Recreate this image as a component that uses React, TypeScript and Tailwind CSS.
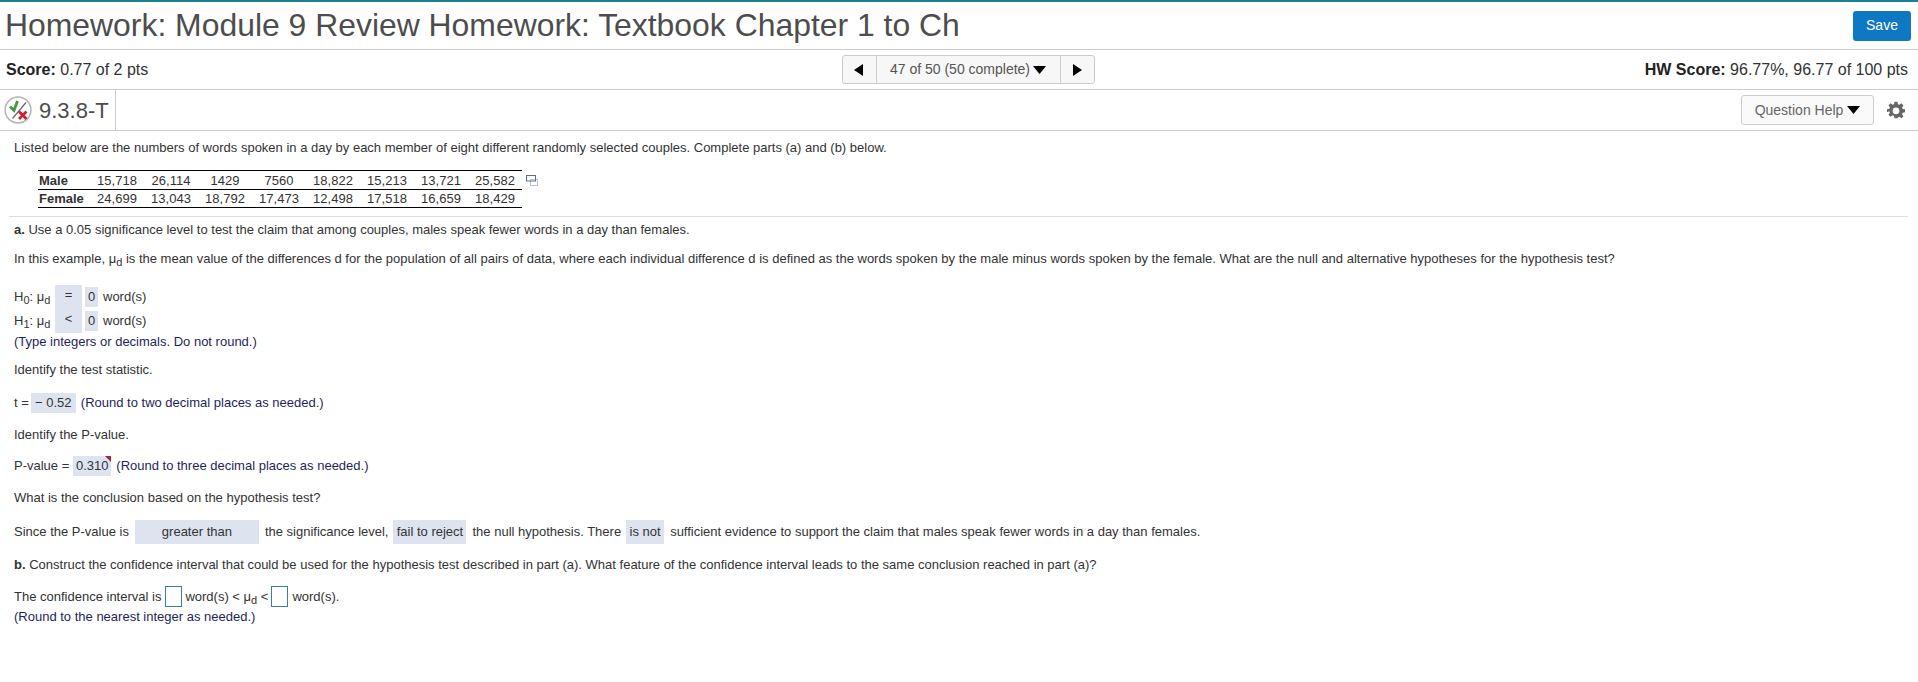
const answer = "bg-[#dde4f0]";

function Mu() {
  return (
    <span>
      μ<sub className="text-[11px]">d</sub>
    </span>
  );
}

function ScoreIcon() {
  return (
    <svg width="28" height="28" viewBox="0 0 28 28" className="shrink-0">
      <circle cx="14" cy="14" r="12.900" fill="#fff" stroke="#b4b4b4" strokeWidth="1.500" />
      <path d="M8.500 22.500 L22 6.500" stroke="#666" strokeWidth="1.200" />
      <path d="M6 10.500 L10 14.500 L13.500 5" fill="none" stroke="#3f9b3f" strokeWidth="2.800" />
      <path d="M15 15.500 L22.500 23 M22.500 15.500 L15 23" stroke="#d0202f" strokeWidth="2.800" />
    </svg>
  );
}

function Gear() {
  return (
    <svg width="18" height="18" viewBox="0 0 24 24" fill="#666">
      <path
        fillRule="evenodd"
        d="M10 1h4l.6 3.200 1.900.8 2.700-1.900 2.800 2.800-1.900 2.700.8 1.900L24 11v4l-3.100.6-.8 1.900 1.900 2.700-2.800 2.800-2.700-1.900-1.900.8L14 23h-4l-.6-3.100-1.900-.8-2.700 1.900-2.800-2.800 1.900-2.700-.8-1.900L0 15v-4l3.100-.6.8-1.900L2 5.800 4.800 3l2.700 1.900 1.900-.8zM12 8.500a4.500 4.500 0 1 0 0 9 4.500 4.500 0 0 0 0-9z"
      />
    </svg>
  );
}

function Caret() {
  return (
    <svg width="13" height="8" viewBox="0 0 13 8" className="shrink-0">
      <path d="M0 0h13L6.500 8z" fill="#000" />
    </svg>
  );
}

const male = ["15,718", "26,114", "1429", "7560", "18,822", "15,213", "13,721", "25,582"];
const female = ["24,699", "13,043", "18,792", "17,473", "12,498", "17,518", "16,659", "18,429"];

export default function App() {
  return (
    <div className="w-[1918px] h-[682px] overflow-hidden bg-white text-[#333] font-['Liberation_Sans',Arial,sans-serif] text-[13px]">
      <div className="h-[50px] border-t-2 border-b border-t-[#1a7f8e] border-b-[#ccc] flex items-center justify-between pl-[5px] pr-[7px]">
        <h1 className="text-[31.900px] leading-none text-[#4d4d4d]">Homework: Module 9 Review Homework: Textbook Chapter 1 to Ch</h1>
        <button className="w-[58px] h-[30px] rounded-[3px] bg-[#0f78c4] text-white text-[14px]">Save</button>
      </div>

      <div className="h-[40px] border-b border-[#ccc] grid grid-cols-3 items-center pl-[6px] pr-[10px] text-[16px]">
        <div>
          <b className="text-[#222]">Score:</b> 0.77 of 2 pts
        </div>
        <div className="flex justify-center">
          <div className="flex h-[29px] ml-[22px] border border-[#ccc] rounded-[3px] bg-[#f7f7f7] text-[14px] text-[#555] items-center">
            <span className="w-[34px] h-full flex items-center justify-center border-r border-[#ccc]">
              <svg width="10" height="12" viewBox="0 0 10 12"><path d="M9 0v12L0 6z" fill="#000" /></svg>
            </span>
            <span className="w-[183px] flex items-center justify-center gap-[3px]">
              47 of 50 (50 complete)
              <Caret />
            </span>
            <span className="w-[34px] h-full flex items-center justify-center border-l border-[#ccc]">
              <svg width="10" height="12" viewBox="0 0 10 12"><path d="M1 0v12l9-6z" fill="#000" /></svg>
            </span>
          </div>
        </div>
        <div className="text-right">
          <b className="text-[#222]">HW Score:</b> 96.77%, 96.77 of 100 pts
        </div>
      </div>

      <div className="h-[41px] border-b border-[#ccc] flex items-center pl-[4px] pr-[13px]">
        <ScoreIcon />
        <span className="ml-[7px] pr-[6px] h-full flex items-center border-r border-[#ccc] text-[22px] text-[#4d4d4d]">9.3.8-T</span>
        <button className="ml-auto w-[133px] h-[30px] border border-[#ccc] rounded-[3px] bg-[#fafafa] text-[14px] text-[#666] flex items-center justify-center gap-[4px]">
          Question Help
          <Caret />
        </button>
        <span className="ml-[13px]"><Gear /></span>
      </div>

      <div className="pl-[14px] pr-[10px]">
        <p className="pt-[9px] leading-[15px]">Listed below are the numbers of words spoken in a day by each member of eight different randomly selected couples. Complete parts (a) and (b) below.</p>

        <div className="flex items-center ml-[24px] mt-[15px]">
          <table className="border-y border-black leading-[15px]">
            <tbody>
              <tr className="border-b border-black h-[19px]">
                <th className="text-left font-bold pl-[1px] w-[52px]">Male</th>
                {male.map((v) => <td key={v} className="w-[54px] text-center">{v}</td>)}
              </tr>
              <tr className="h-[18px]">
                <th className="text-left font-bold pl-[1px]">Female</th>
                {female.map((v) => <td key={v} className="text-center">{v}</td>)}
              </tr>
            </tbody>
          </table>
          <svg width="12" height="11" viewBox="0 0 12 11" className="ml-[4px] mb-[17px]" fill="none">
            <rect x="4.500" y="4.500" width="7" height="6" stroke="#b8c4d0" />
            <rect x="0.500" y="0.500" width="9" height="5.500" stroke="#5f6f80" />
          </svg>
        </div>
      </div>

      <div className="ml-[9px] mr-[10px] mt-[8px] border-t border-[#ddd] pl-[5px] pt-[5px]">
        <p className="leading-[15px]"><b>a.</b> Use a 0.05 significance level to test the claim that among couples, males speak fewer words in a day than females.</p>
        <p className="leading-[15px] mt-[14px]">
          In this example, <Mu /> is the mean value of the differences d for the population of all pairs of data, where each individual difference d is defined as the words spoken by the male minus words spoken by the female. What are the null and alternative hypotheses for the hypothesis test?
        </p>

        <div className="mt-[19px] flex items-center h-[24px]">
          <span className="w-[41px]">H<sub className="text-[11px]">0</sub>: <Mu /></span>
          <span className={`${answer} w-[27px] h-[24px] text-center leading-[20px]`}>=</span>
          <span className={`${answer} w-[13px] h-[20px] text-center leading-[20px] ml-[3px]`}>0</span>
          <span className="ml-[5px]">word(s)</span>
        </div>
        <div className="flex items-center h-[24px]">
          <span className="w-[41px]">H<sub className="text-[11px]">1</sub>: <Mu /></span>
          <span className={`${answer} w-[27px] h-[24px] text-center leading-[20px]`}>&lt;</span>
          <span className={`${answer} w-[13px] h-[20px] text-center leading-[20px] ml-[3px]`}>0</span>
          <span className="ml-[5px]">word(s)</span>
        </div>
        <p className="leading-[15px] mt-[1px] text-[#1f1f5c]">(Type integers or decimals. Do not round.)</p>

        <p className="leading-[15px] mt-[13px]">Identify the test statistic.</p>

        <div className="flex items-center h-[20px] mt-[16px]">
          <span>t =</span>
          <span className={`${answer} w-[45px] h-[20px] text-center leading-[20px] ml-[2px]`}>− 0.52</span>
          <span className="ml-[5px] text-[#1f1f5c]">(Round to two decimal places as needed.)</span>
        </div>

        <p className="leading-[15px] mt-[14px]">Identify the P-value.</p>

        <div className="flex items-center h-[20px] mt-[14px]">
          <span>P-value =</span>
          <span className={`${answer} relative w-[38px] h-[20px] text-center leading-[20px] ml-[4px]`}>
            0.310
            <span className="absolute top-0 right-0 border-t-[6px] border-l-[6px] border-t-[#b0203c] border-l-transparent" />
          </span>
          <span className="ml-[5px] text-[#1f1f5c]">(Round to three decimal places as needed.)</span>
        </div>

        <p className="leading-[15px] mt-[14px]">What is the conclusion based on the hypothesis test?</p>

        <div className="flex items-center h-[24px] mt-[15px]">
          <span>Since the P-value is</span>
          <span className={`${answer} w-[124px] h-[24px] text-center leading-[24px] ml-[6px]`}>greater than</span>
          <span className="ml-[6px]">the significance level,</span>
          <span className={`${answer} w-[73px] h-[24px] text-center leading-[24px] ml-[5px]`}>fail to reject</span>
          <span className="ml-[6px]">the null hypothesis. There</span>
          <span className={`${answer} w-[38px] h-[24px] text-center leading-[24px] ml-[5px]`}>is not</span>
          <span className="ml-[6px]">sufficient evidence to support the claim that males speak fewer words in a day than females.</span>
        </div>

        <p className="leading-[15px] mt-[13px]"><b>b.</b> Construct the confidence interval that could be used for the hypothesis test described in part (a). What feature of the confidence interval leads to the same conclusion reached in part (a)?</p>

        <div className="flex items-center h-[21px] mt-[14px]">
          <span>The confidence interval is</span>
          <span className="w-[17px] h-[21px] border border-[#3d7f96] ml-[4px]" />
          <span className="ml-[3px]">word(s) &lt; <Mu /> &lt;</span>
          <span className="w-[17px] h-[21px] border border-[#3d7f96] ml-[3px]" />
          <span className="ml-[4px]">word(s).</span>
        </div>
        <p className="leading-[15px] text-[#1f1f5c] mt-[2px]">(Round to the nearest integer as needed.)</p>
      </div>
    </div>
  );
}
